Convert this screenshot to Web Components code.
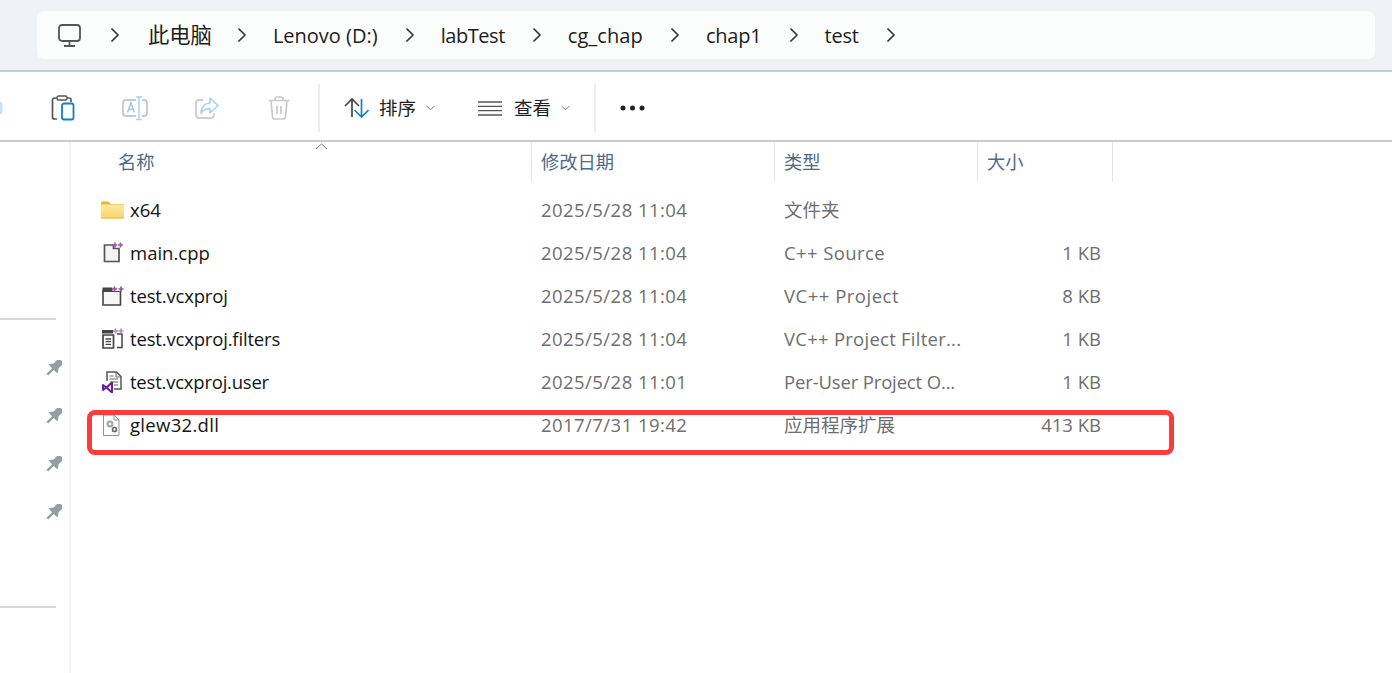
<!DOCTYPE html>
<html lang="zh">
<head>
<meta charset="utf-8">
<title>test</title>
<style>
    html, body { margin: 0; height: 100%; overflow: hidden; background: #fff; }
    body { font-family: "Open Sans", "Noto Sans CJK SC", sans-serif; color: #1a1a1a; }
</style>
</head>
<body>
<explorer-window>
    <address-bar slot="address"></address-bar>
    <command-bar slot="commands"></command-bar>
    <side-rail slot="side"></side-rail>
    <file-list slot="files">
        <file-row icon="folder" name="x64" date="2025/5/28 11:04" type="文件夹" size="" style="--type-lift:2px"></file-row>
        <file-row icon="cpp" name="main.cpp" date="2025/5/28 11:04" type="C++ Source" size="1 KB" style="--type-track:.4px"></file-row>
        <file-row icon="proj" name="test.vcxproj" date="2025/5/28 11:04" type="VC++ Project" size="8 KB" style="--name-track:-.17px;--type-track:.5px"></file-row>
        <file-row icon="filters" name="test.vcxproj.filters" date="2025/5/28 11:04" type="VC++ Project Filter..." size="1 KB" style="--name-track:-.17px;--type-track:.25px"></file-row>
        <file-row icon="user" name="test.vcxproj.user" date="2025/5/28 11:01" type="Per-User Project O..." size="1 KB" style="--name-track:-.22px;--type-track:-.15px"></file-row>
        <file-row icon="dll" name="glew32.dll" date="2017/7/31 19:42" type="应用程序扩展" size="413 KB" style="--name-track:.3px;--type-lift:2px"></file-row>
    </file-list>
</explorer-window>

<script>
class ExplorerWindow extends HTMLElement {
    constructor() {
        super();
        this.attachShadow({mode: 'open'}).innerHTML = `
            <style>
                :host { display: grid; grid-template-columns: 71px 1fr; grid-template-rows: 72px 70px 531px; height: 673px; position: relative; }
                .top { grid-column: 1 / 3; min-width: 0; }
            </style>
            <div class="top"><slot name="address"></slot></div>
            <div class="top"><slot name="commands"></slot></div>
            <slot name="side"></slot>
            <slot name="files"></slot>
        `;
    }
}

class AddressBar extends HTMLElement {
    constructor() {
        super();
        // labTest and friends run a little narrow in the reference
        const crumbs = [['此电脑', '21.3px', 0], ['Lenovo (D:)', '20px', 0], ['labTest', '20px', -.45], ['cg_chap', '20px', .1], ['chap1', '20px', -.2], ['test', '20px', -.25]];
        const chevron = '<svg class="chev" width="10" height="16" viewBox="0 0 10 16"><path d="M1.5 1.500 8 8l-6.500 6.500" fill="none" stroke="#333" stroke-width="1.600"/></svg>';
        this.attachShadow({mode: 'open'}).innerHTML = `
            <style>
                :host { display: block; height: 72px; box-sizing: border-box; background: #eff3f6; border-bottom: 2px solid #c1cfd0; padding: 11px 17px 0 37px; }
                .box { height: 48px; background: #fbfdfd; border-radius: 7px; display: flex; align-items: center; padding-left: 21px; font-size: 20px; color: #1c1c1c; }
                svg.pc { margin-right: 29px; }
                .chev { flex: none; }
                span { white-space: nowrap; }
                .item { display: flex; align-items: center; }
                .item span { margin-left: 26px; }
                .item .chev { margin-left: 27px; }
                .item:nth-of-type(1) span { margin: 0 0 3px 28px; }
                .item:nth-of-type(1) .chev { margin-left: 25px; }
            </style>
            <div class="box">
                <svg class="pc" width="23" height="23" viewBox="0 0 23 23" fill="none" stroke="#555" stroke-width="1.800">
                    <rect x="1" y="1" width="21" height="16" rx="3"/>
                    <path d="M11.500 17v4.500M6 22h11"/>
                </svg>
                ${chevron}
                ${crumbs.map(c => `<div class="item"><span style="font-size:${c[1]};letter-spacing:${c[2]}px">${c[0]}</span>${chevron}</div>`).join('')}
            </div>
        `;
    }
}

class CommandBar extends HTMLElement {
    constructor() {
        super();
        this.attachShadow({mode: 'open'}).innerHTML = `
            <style>
                :host { display: flex; align-items: center; height: 70px; box-sizing: border-box; padding-top: 4px; border-bottom: 2px solid #c1cfd0; background: #fff; font-size: 18.500px; color: #222; }
                .cell { width: 72px; display: flex; justify-content: center; flex: none; }
                .cell.first { width: 27px; justify-content: flex-start; }
                .sep { width: 2px; height: 48px; background: #ececec; flex: none; }
                .menu { display: flex; align-items: center; flex: none; }
                .menu span { margin: 0 0 2px 10px; }
                .caret { margin-left: 10px; }
                svg { display: block; }
            </style>
            <div class="cell first">
                <svg width="3" height="14" viewBox="0 0 3 14"><path d="M0 1h1a2 2 0 0 1 1.500 2v8a2 2 0 0 1-1.500 2H0" fill="#c6e2f6"/></svg>
            </div>
            <div class="cell">
                <svg width="24" height="26" viewBox="0 0 24 26" fill="none">
                    <path d="M6 24H3.500a2 2 0 0 1-2-2V5a2 2 0 0 1 2-2H18a2 2 0 0 1 2 2v2" stroke="#555" stroke-width="1.700"/>
                    <rect x="6" y="1" width="10" height="4" rx="1.500" fill="#fff" stroke="#555" stroke-width="1.400"/>
                    <rect x="11" y="8.500" width="11.500" height="16" rx="2" fill="#fff" stroke="#0f7fd6" stroke-width="1.800"/>
                </svg>
            </div>
            <div class="cell">
                <svg width="26" height="25" viewBox="0 0 26 25" fill="none">
                    <path d="M14 4H4a3 3 0 0 0-3 3v10a3 3 0 0 0 3 3h10M20 4h2a3 3 0 0 1 3 3v10a3 3 0 0 1-3 3h-2" stroke="#c8c8c8" stroke-width="1.800"/>
                    <path d="M14 1h6M17 1v22M14 23.500h6" stroke="#a7d3f3" stroke-width="1.500"/>
                    <path d="M5.500 16.500 9 7l3.500 9.500M6.800 13.300h4.500" stroke="#a7c8e2" stroke-width="1.500"/>
                </svg>
            </div>
            <div class="cell">
                <svg width="24" height="24" viewBox="0 0 24 24" fill="none">
                    <path d="M8 4H4a3 3 0 0 0-3 3v12a3 3 0 0 0 3 3h12a3 3 0 0 0 3-3v-2" stroke="#cfcfcf" stroke-width="1.800"/>
                    <path d="M15 2l8 7.500-8 7.500v-4.500c-4.500 0-7 1.500-9 5 0-6 3-10 9-10.500z" stroke="#a7d3f3" stroke-width="1.700" stroke-linejoin="round"/>
                </svg>
            </div>
            <div class="cell">
                <svg width="22" height="24" viewBox="0 0 22 24" fill="none" stroke="#c9c9c9" stroke-width="1.700">
                    <path d="M0.500 4.500h21M7 4.500V3a2 2 0 0 1 2-2h4a2 2 0 0 1 2 2v1.500"/>
                    <path d="M3 5l1.500 15.500a2.500 2.500 0 0 0 2.500 2.500h8a2.500 2.500 0 0 0 2.500-2.500L19 5M9 10v8M13 10v8"/>
                </svg>
            </div>
            <div class="sep" style="margin-left:3px"></div>
            <div class="menu" style="margin-left:24px">
                <svg width="25" height="20" viewBox="0 0 25 20" fill="none" stroke-width="1.700">
                    <path d="M1 8 8 1l7 7M8 1v18" stroke="#444"/>
                    <path d="M10.500 12l7 7 7-7M17.500 19V1" stroke="#0f7fd6"/>
                </svg>
                <span>排序</span>
                <svg class="caret" width="9" height="6" viewBox="0 0 9 6"><path d="M.5.800 4.500 4.800 8.500.800" fill="none" stroke="#777"/></svg>
            </div>
            <div class="menu" style="margin-left:43px">
                <svg width="24" height="15" viewBox="0 0 24 15" fill="none" stroke="#555" stroke-width="1.300">
                    <path d="M0 1h24M0 5.300h24M0 9.600h24M0 14h24"/>
                </svg>
                <span style="margin-left:12px">查看</span>
                <svg class="caret" width="9" height="6" viewBox="0 0 9 6"><path d="M.5.800 4.500 4.800 8.500.800" fill="none" stroke="#777"/></svg>
            </div>
            <div class="sep" style="margin-left:24px"></div>
            <div class="menu" style="margin-left:24px">
                <svg width="25" height="6" viewBox="0 0 25 6" fill="#222"><circle cx="3" cy="3" r="2.500"/><circle cx="12.500" cy="3" r="2.500"/><circle cx="22" cy="3" r="2.500"/></svg>
            </div>
        `;
    }
}

class SideRail extends HTMLElement {
    constructor() {
        super();
        // upright pin, turned so the head sits top right
        const pin = '<svg width="16" height="16" viewBox="0 0 16 16"><path transform="rotate(45 8 8)" d="M3 -2.500h10v2.500h-1.500v5l2.500 3.500v1h-4.800v8h-2.400v-8h-4.800v-1l2.500-3.500v-5h-1.500z" fill="#939ea6"/></svg>';
        this.attachShadow({mode: 'open'}).innerHTML = `
            <style>
                :host { display: flex; flex-direction: column; align-items: flex-end; border-right: 2px solid #f4f4f4; height: 531px; box-sizing: border-box; }
                hr { border: 0; height: 2px; width: 56px; margin: 0; background: #d8d8d8; align-self: flex-start; }
                .pins { display: flex; flex-direction: column; gap: 32px; margin: 40px 7px 0 0; }
                svg { display: block; }
            </style>
            <hr style="margin-top:176px">
            <div class="pins">${pin.repeat(4)}</div>
            <hr style="margin-top:86px">
        `;
    }
}

class FileList extends HTMLElement {
    constructor() {
        super();
        this.attachShadow({mode: 'open'}).innerHTML = `
            <style>
                :host { display: block; position: relative; }
                .head { display: grid; grid-template-columns: 461px 243px 203px 135px; height: 40px; font-size: 18.300px; color: #4c6a8c; }
                .head div { border-right: 1px solid #e5e5e5; display: flex; align-items: center; padding-left: 9px; box-sizing: border-box; padding-bottom: 2px; }
                .head div:first-child { padding-left: 47px; }
                .sort { position: absolute; left: 244px; top: 1px; }
                .rows { display: flex; flex-direction: column; padding-top: 6px; }
                .mark { position: absolute; left: 16px; top: 268px; width: 1077px; height: 35px; border: 5px solid #f93c3c; border-radius: 8px; pointer-events: none; }
            </style>
            <div class="head">
                <div>名称</div><div>修改日期</div><div>类型</div><div>大小</div>
                <svg class="sort" width="13" height="7" viewBox="0 0 13 7"><path d="M1 6 6.500 1 12 6" fill="none" stroke="#777"/></svg>
            </div>
            <div class="rows"><slot></slot></div>
            <div class="mark"></div>
        `;
    }
}

const PLUS = (x, y, c) => `<path d="M${x - 2.5} ${y}h5M${x} ${y - 2.5}v5" stroke="${c}" stroke-width="1.700"/>`;

const FILE_ICONS = {
    folder: `<svg width="23" height="18" viewBox="0 0 23 18">
        <defs><linearGradient id="f" x1="0" y1="0" x2="0" y2="1"><stop offset="0" stop-color="#fde9a6"/><stop offset="1" stop-color="#fcd466"/></linearGradient></defs>
        <path d="M0 2a1.500 1.500 0 0 1 1.500-1.500h6L10 3h13v3H0z" fill="#eeb52e"/>
        <rect x="0" y="3.500" width="23" height="14" rx="1" fill="url(#f)"/>
        <rect x="0" y="16.500" width="23" height="1" fill="#e8b94e"/>
    </svg>`,
    cpp: `<svg width="23" height="22" viewBox="0 0 23 22" fill="none">
        <path d="M3.500 3h9v3.500h5.500v13h-14.500z" fill="#f4f4f4" stroke="#555" stroke-width="1.700"/>
        ${PLUS(14, 3, '#a855a8')}${PLUS(19.500, 3, '#a855a8')}
    </svg>`,
    proj: `<svg width="23" height="22" viewBox="0 0 23 22" fill="none">
        <path d="M2 5.500h17.500v14.500h-17.500z" fill="#f6f6f6" stroke="#444" stroke-width="1.600"/>
        <path d="M1.500 2.500h10v4h-10z" fill="#444"/>
        <rect x="11.500" y="0" width="11" height="6" fill="#fff"/>
        <path d="M2 6.500h17.500" stroke="#444" stroke-width="1"/>
        ${PLUS(13.500, 4, '#a2479f')}${PLUS(20, 4, '#a2479f')}
    </svg>`,
    filters: `<svg width="23" height="22" viewBox="0 0 23 22" fill="none">
        <path d="M16 6h5v13.500h-5" stroke="#444" stroke-width="1.500"/>
        <path d="M1 2h11v3.500h-11z" fill="#444"/>
        <path d="M2 7h10.500v13h-10.500z" fill="#fff" stroke="#444" stroke-width="1.700"/>
        <path d="M4.500 11h5.500M4.500 13.700h5.500M4.500 16.400h5.500" stroke="#444" stroke-width="1.300"/>
        ${PLUS(14.500, 3, '#b98ac0')}${PLUS(20, 3, '#b98ac0')}
    </svg>`,
    user: `<svg width="23" height="22" viewBox="0 0 23 22" fill="none">
        <path d="M6 10V1h9.500l4.500 4.500v12.500h-7" stroke="#555" stroke-width="1.500"/>
        <path d="M15 1v5h5M8.500 5h4M8.500 8h8.500M9 11h8M13 14h4" stroke="#666"/>
        <path d="M2 14l3.500 2.500 5.500-5v10l-5.500-5-3.500 2.500z" fill="none" stroke="#6a1f9b" stroke-width="2" stroke-linejoin="round"/>
    </svg>`,
    dll: `<svg width="23" height="22" viewBox="0 0 23 22" fill="none">
        <path d="M2.500 1h10.500l5 5v15.500h-15.500z" fill="#fff" stroke="#8c949c" stroke-width="1"/>
        <path d="M13 1v5h5" stroke="#8c949c"/>
        <circle cx="9" cy="10" r="2.400" stroke="#9aa2aa" stroke-width="2"/>
        <circle cx="13.500" cy="15.500" r="2" stroke="#666c72" stroke-width="1.700"/>
    </svg>`
};

class FileRow extends HTMLElement {
    connectedCallback() {
        if (this.shadowRoot) return;
        const get = (n) => this.getAttribute(n) || '';
        this.attachShadow({mode: 'open'}).innerHTML = `
            <style>
                :host { display: grid; grid-template-columns: 470px 243px 207px 110px; height: 43px; align-items: center; font-size: 18.500px; color: #6e6e6e; }
                .name { display: flex; align-items: center; padding-left: 30px; gap: 6px; color: #141414; letter-spacing: var(--name-track, 0); }
                .name svg { flex: none; }
                .name span, .cell { white-space: nowrap; }
                .date { letter-spacing: .45px; }
                .type { letter-spacing: var(--type-track, 0); margin-bottom: var(--type-lift, 0); }
                .size { text-align: right; }
            </style>
            <div class="name">${FILE_ICONS[get('icon')]}<span>${get('name')}</span></div>
            <div class="cell date">${get('date')}</div>
            <div class="cell type">${get('type')}</div>
            <div class="cell size">${get('size')}</div>
        `;
    }
}

customElements.define('explorer-window', ExplorerWindow);
customElements.define('address-bar', AddressBar);
customElements.define('command-bar', CommandBar);
customElements.define('side-rail', SideRail);
customElements.define('file-list', FileList);
customElements.define('file-row', FileRow);
</script>
</body>
</html>
